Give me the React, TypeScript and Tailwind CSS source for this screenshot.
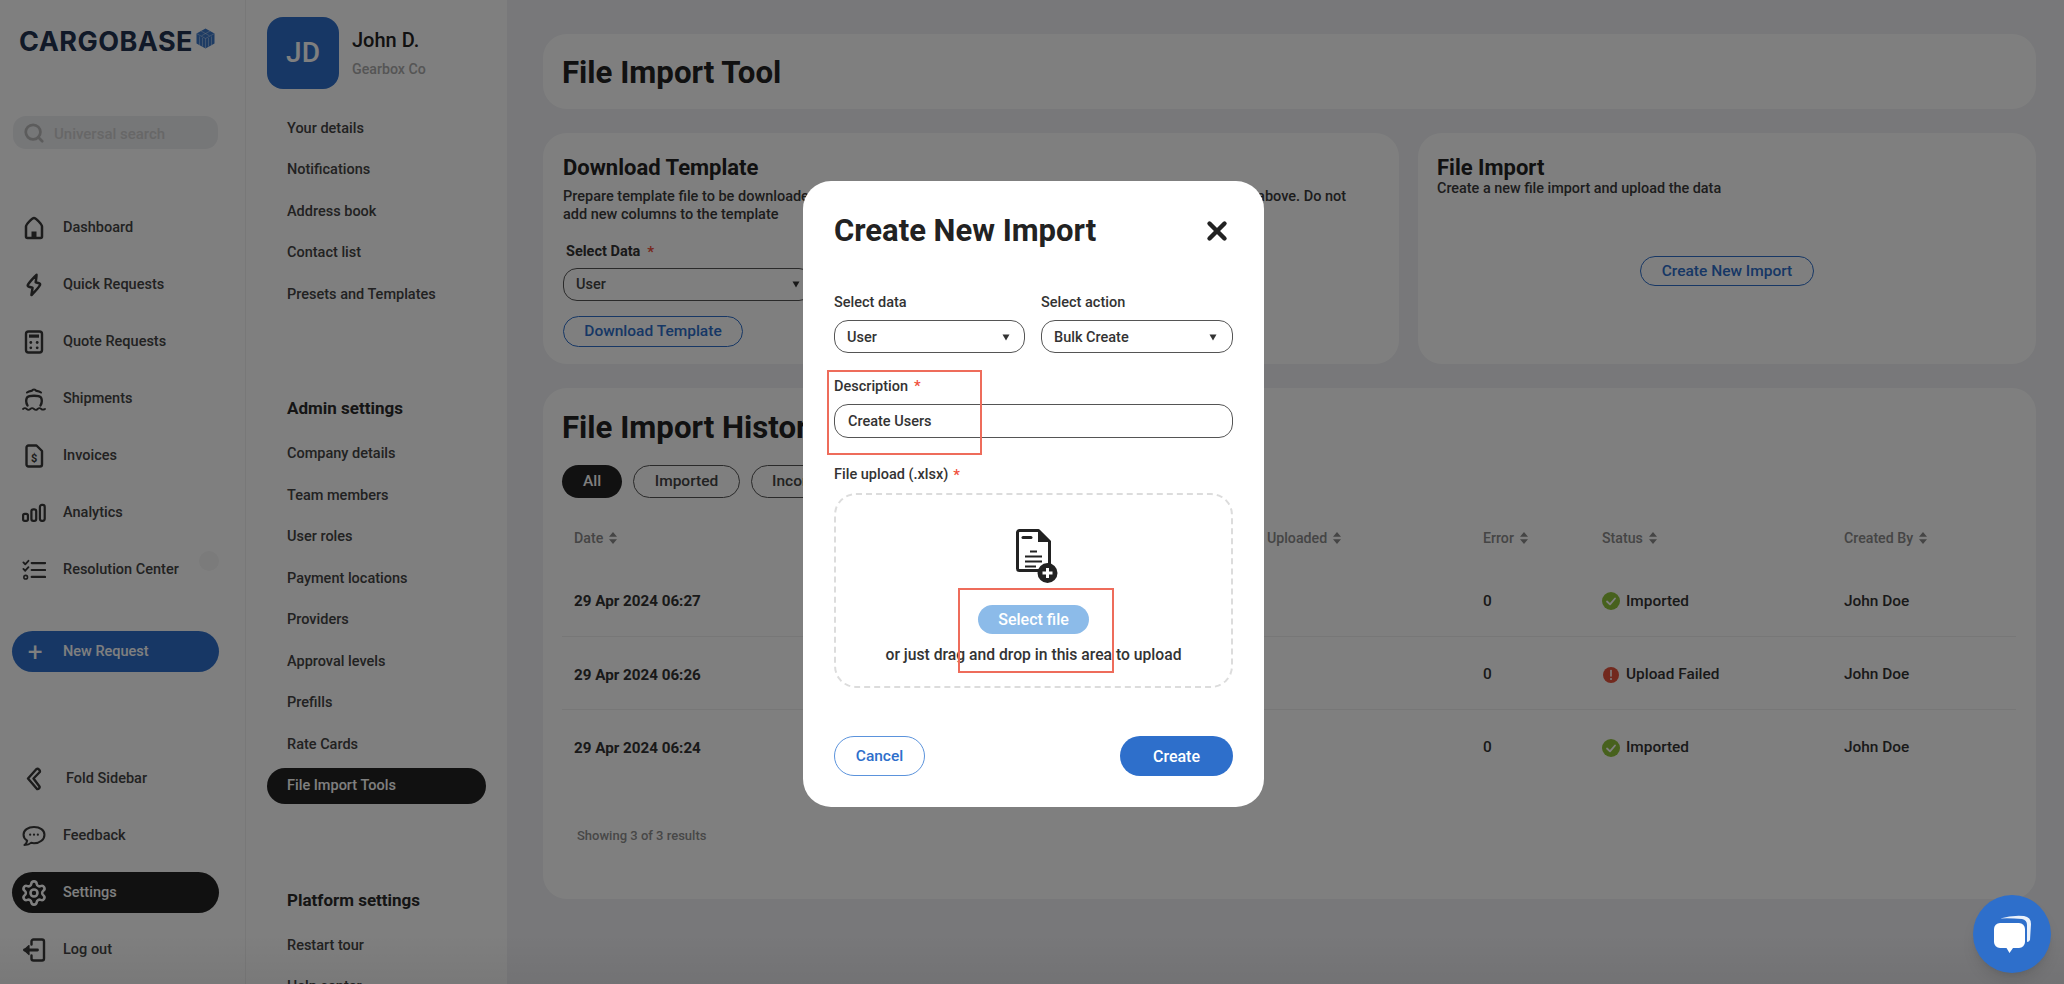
import React from "react";
import { Search, Settings, X } from "lucide-react";

const ic = "text-[#383838]";

const Home = () => (
  <svg width="24" height="24" viewBox="0 0 24 24" fill="none" stroke="currentColor" strokeWidth="2.5" strokeLinejoin="round">
    <path d="M4 20.500V10.500C4 8.500 10 2 12 2s8 6.500 8 8.500v10a1.500 1.500 0 0 1-1.500 1.500h-13A1.500 1.500 0 0 1 4 20.500Z" />
    <rect x="9.500" y="15.500" width="5" height="6" fill="currentColor" stroke="none" />
  </svg>
);
const Bolt = () => (
  <svg width="24" height="24" viewBox="0 0 24 24" fill="none" stroke="currentColor" strokeWidth="2.5" strokeLinejoin="round">
    <path d="M14.500 1.800C12 4.500 7 9.500 5.800 12c-.4 1 .4 1.500 1.200 1.700l3.500 1c-.2 2.500-.8 5-1 7.300 2.500-2.500 7-7 8.500-10 .4-1-.3-1.500-1-1.700l-3.300-1c.3-2.500.8-5 .8-7.500Z" />
  </svg>
);
const Calc = () => (
  <svg width="24" height="24" viewBox="0 0 24 24" fill="none" stroke="currentColor" strokeWidth="2.4">
    <rect x="4" y="1.500" width="16" height="21" rx="2.500" />
    <rect x="7" y="4.500" width="10" height="3.200" fill="currentColor" stroke="none" />
    <g fill="currentColor" stroke="none">
      <circle cx="8.800" cy="12.500" r="1.400" /><circle cx="15.200" cy="12.500" r="1.400" />
      <circle cx="8.800" cy="17.800" r="1.400" /><circle cx="15.200" cy="17.800" r="1.400" />
    </g>
  </svg>
);
const Ship = () => (
  <svg width="24" height="24" viewBox="0 0 24 24" fill="none" stroke="currentColor" strokeWidth="2.400" strokeLinecap="round" strokeLinejoin="round">
    <path d="M5 5.500C7 4 9 4 10 3.800 10.500 2 13.500 2 14 3.800c1 .2 3 .2 5 1.700" strokeWidth="2.100" />
    <path d="M5.500 18.500C3.500 15 4 12.500 5 10.500c2-2.400 12-2.400 14 0 1 2 1.500 4.500-.5 8" />
    <path d="M1 22c1.500-1.200 2.500-1.200 3.700 0s2.400 1.200 3.600 0 2.400-1.200 3.700 0 2.400 1.200 3.600 0 2.400-1.200 3.700 0 2 .8 3.700 0" strokeWidth="1.800" />
  </svg>
);
const Invoice = () => (
  <svg width="24" height="24" viewBox="0 0 24 24" fill="none" stroke="currentColor" strokeWidth="2.400" strokeLinejoin="round">
    <path d="M6.500 1.500h8l5.500 5.500v13.500a2 2 0 0 1-2 2H6.500a2 2 0 0 1-2-2v-17a2 2 0 0 1 2-2Z" />
    <text x="12.200" y="18" textAnchor="middle" fontSize="11" fontFamily="Roboto, sans-serif" fontWeight="700" fill="currentColor" stroke="none">$</text>
  </svg>
);
const Bars = () => (
  <svg width="26" height="20" viewBox="0 0 26 20" fill="none" stroke="currentColor" strokeWidth="2.400">
    <rect x="1.200" y="11" width="5.200" height="7.500" rx="1.800" />
    <rect x="10.200" y="6" width="5.200" height="12.500" rx="2" />
    <rect x="19.400" y="1.200" width="5.200" height="17.300" rx="2.200" />
  </svg>
);
const Checks = () => (
  <svg width="26" height="22" viewBox="0 0 26 22" fill="none" stroke="currentColor" strokeWidth="2.400" strokeLinecap="round" strokeLinejoin="round">
    <path d="M10.500 3.500h14.500M10.500 11h14.500M10.500 18.500h14.500" />
    <path d="M1.500 2.800 3.500 4.800 7 1M1.500 9.800 3.500 11.800 7 8" strokeWidth="2" />
    <circle cx="4" cy="18.800" r="2" strokeWidth="1.700" />
  </svg>
);
const Fold = () => (
  <svg width="16" height="24" viewBox="0 0 16 24" fill="none" stroke="currentColor" strokeWidth="2.400" strokeLinejoin="round">
    <path d="M10.500 2 2 11.500 11 22c1.500.5 3-1.200 2.500-2.500L7.500 11.500l6.300-6.500c.7-1.500-1.600-4-3.300-3Z" />
  </svg>
);
const Chat = () => (
  <svg width="28" height="24" viewBox="0 0 28 24" fill="none" stroke="currentColor" strokeWidth="2.400" strokeLinejoin="round">
    <path d="M14 1.500C7 1.500 1.800 5.200 1.800 10.500c0 3 1.700 5.300 4.200 6.800-.2 2-1.200 3.800-3.200 5.200 3.500 0 6-.8 7.700-2.500 1.100.3 2.300.5 3.500.5 7 0 12.200-4.400 12.200-10S21 1.500 14 1.500Z" />
    <g fill="currentColor" stroke="none">
      <circle cx="9.500" cy="10.500" r="1.300" /><circle cx="14" cy="10.500" r="1.300" /><circle cx="18.500" cy="10.500" r="1.300" />
    </g>
  </svg>
);
const Logout = () => (
  <svg width="24" height="24" viewBox="0 0 24 24" fill="none" stroke="currentColor" strokeWidth="2.400" strokeLinecap="round" strokeLinejoin="round">
    <path d="M9.500 6.500V3.500a2 2 0 0 1 2-2h8.500a2 2 0 0 1 2 2v17a2 2 0 0 1-2 2h-8.500a2 2 0 0 1-2-2v-3" />
    <path d="M15.500 12H2.500" strokeWidth="2.800" />
    <path d="M7 7.500 2 12l5 4.500Z" fill="currentColor" strokeWidth="1.200" />
  </svg>
);
const Hex = () => (
  <svg width="19" height="21" viewBox="0 0 19 21" className="ml-[3px] mt-[-7px]">
    <polygon points="9.5,0.5 18.500,5.500 18.500,15.500 9.500,20.500 0.500,15.500 0.500,5.500" fill="#3d78c8" />
    <g stroke="#e8f0fa" strokeWidth=".7" fill="none" opacity=".6">
      <path d="M9.500 10.500V20M9.500 10.500 18 5.800M9.500 10.500 1 5.800M5 3 13.500 7.800M14 3 5.500 7.800M3.500 8.500v8.500M6.500 10v8.500M12.500 10v8.500M15.500 8.500v8.500" />
    </g>
  </svg>
);
const Sort = () => (
  <svg width="8" height="12" viewBox="0 0 8 12" fill="currentColor" className="ml-[6px]">
    <path d="M4 0 8 4.800H0ZM4 12 0 7.200H8Z" />
  </svg>
);
const Caret = () => (
  <svg width="8" height="7" viewBox="0 0 8 7" fill="#333"><path d="M0.500 0.500h7L4 6.500Z" /></svg>
);
const Star = () => <span className="text-[#f0503c] text-[15px] leading-none">*</span>;

const OkIcon = () => (
  <svg width="18" height="18" viewBox="0 0 18 18">
    <circle cx="9" cy="9" r="9" fill="#8fc33a" />
    <path d="M5 9.500 8 12.300 13 6.500" stroke="#fff" strokeWidth="1.800" fill="none" strokeLinecap="round" strokeLinejoin="round" />
  </svg>
);
const ErrIcon = () => (
  <svg width="18" height="18" viewBox="0 0 18 18">
    <circle cx="9" cy="9" r="8" fill="#e5533d" />
    <path d="M9 4.500v5.500" stroke="#fff" strokeWidth="1.600" strokeLinecap="round" />
    <circle cx="9" cy="13" r="1" fill="#fff" />
  </svg>
);

const FileAdd = () => (
  <svg width="42" height="54" viewBox="0 0 42 54" fill="none">
    <path d="M3.500 1.500h19l11 11v27a2 2 0 0 1-2 2h-28a2 2 0 0 1-2-2v-36a2 2 0 0 1 2-2Z" stroke="#222" strokeWidth="3" fill="#fff" strokeLinejoin="round" />
    <path d="M22 1.500 33.500 13H22Z" fill="#222" />
    <path d="M7 8.500h8" stroke="#222" strokeWidth="3" strokeLinecap="round" />
    <path d="M14 22.500h7M9 27.500h17M9 32.500h17M9 37.500h11" stroke="#222" strokeWidth="2.200" />
    <circle cx="31.500" cy="44" r="10" fill="#222" />
    <path d="M31.500 39v10M26.500 44h10" stroke="#fff" strokeWidth="3" />
  </svg>
);

const mainNav = [
  { label: "Dashboard", icon: <Home /> },
  { label: "Quick Requests", icon: <Bolt /> },
  { label: "Quote Requests", icon: <Calc /> },
  { label: "Shipments", icon: <Ship /> },
  { label: "Invoices", icon: <Invoice /> },
  { label: "Analytics", icon: <Bars /> },
  { label: "Resolution Center", icon: <Checks /> },
];

const NavRow = ({ icon, label, offset }: { icon: React.ReactNode; label: string; offset?: boolean }) => (
  <div className="h-[57px] flex items-center text-[14.500px] font-medium text-[#444]">
    <span className={`w-[24px] ml-[22px] flex justify-center shrink-0 ${ic}`}>{icon}</span>
    <span className={offset ? "ml-[20px]" : "ml-[17px]"}>{label}</span>
  </div>
);

const Sub = ({ label, active }: { label: string; active?: boolean }) => (
  <div className="h-[41.500px] flex items-center">
    {active ? (
      <div className="w-[219px] h-[36px] rounded-full bg-[#222] text-white pl-[20px] flex items-center text-[14.500px] font-medium">{label}</div>
    ) : (
      <span className="pl-[20px] text-[14.500px] font-medium text-[#444]">{label}</span>
    )}
  </div>
);

const rows = [
  { date: "29 Apr 2024 06:27", ok: true, h: "h-[74px] pt-[4px]" },
  { date: "29 Apr 2024 06:26", ok: false, h: "h-[73px] pt-[4px]" },
  { date: "29 Apr 2024 06:24", ok: true, h: "h-[74px] pt-[2px]" },
];

const Col = "grid grid-cols-[693px_216px_119px_242px_1fr] pl-[12px] items-center";

export default function App() {
  return (
    <div className="relative w-full h-screen overflow-hidden flex bg-white font-['Roboto',sans-serif] text-[#333]">
      {/* Primary sidebar */}
      <aside className="w-[246px] shrink-0 h-full bg-white border-r border-[#f0f0f0] flex flex-col relative">
        <div className="h-[116px] pl-[19px] pt-[24px] flex items-start">
          <div className="flex items-center mt-[2px]">
            <span className="font-['Inter',sans-serif] font-bold text-[#233350] text-[27px] leading-[32px] tracking-[0.450px]">CARGOBASE</span>
            <Hex />
          </div>
        </div>
        <div className="ml-[13px] w-[205px] h-[33px] rounded-[13px] bg-[#edeef1] flex items-center pl-[10px]">
          <Search size={22} strokeWidth={3} className="text-[#b8b8b8]" />
          <span className="ml-[9px] mt-[3px] text-[15px] font-medium text-[#cfcfcf]">Universal search</span>
        </div>
        <nav className="mt-[50px]">
          {mainNav.map((n) => <NavRow key={n.label} icon={n.icon} label={n.label} />)}
        </nav>
        <div className="ml-[12px] mt-[33px] w-[207px] h-[41px] rounded-full bg-[#2e6fcb] flex items-center text-white text-[14.500px] font-medium">
          <span className="ml-[16px] text-[26px] font-normal leading-none w-[14px] flex justify-center">+</span>
          <span className="ml-[21px]">New Request</span>
        </div>
        <div className="mt-[78px]"><NavRow icon={<Fold />} label="Fold Sidebar" offset /></div>
        <NavRow icon={<Chat />} label="Feedback" />
        <div className="h-[57px] flex items-center">
          <div className="ml-[12px] w-[207px] h-[41px] rounded-full bg-[#222] text-white flex items-center text-[14.500px] font-medium">
            <Settings size={28} strokeWidth={2.200} className="ml-[8px]" />
            <span className="ml-[15px]">Settings</span>
          </div>
        </div>
        <NavRow icon={<Logout />} label="Log out" />
        <span className="absolute left-[199px] top-[551px] w-[20px] h-[20px] rounded-full bg-[#f6f6f6]" />
      </aside>

      {/* Secondary sidebar */}
      <aside className="w-[261px] shrink-0 h-full bg-white pl-[21px] pt-[17px]">
        <div className="flex items-start">
          <div className="w-[72px] h-[72px] rounded-[16px] bg-[#2e6fcb] text-white text-[28px] font-medium flex items-center justify-center">JD</div>
          <div className="ml-[13px]">
            <div className="text-[20px] leading-[26px] font-medium text-[#222] mt-[10px]">John D.</div>
            <div className="text-[14.200px] leading-[18px] mt-[7px] text-[#ababab] font-medium">Gearbox Co</div>
          </div>
        </div>
        <div className="mt-[19px]">
          {["Your details", "Notifications", "Address book", "Contact list", "Presets and Templates"].map((s) => <Sub key={s} label={s} />)}
        </div>
        <div className="mt-[81px] h-[24px] flex items-center pl-[20px] text-[17px] font-bold text-[#2b2b2b]">Admin settings</div>
        <div className="mt-[13px]">
          {["Company details", "Team members", "User roles", "Payment locations", "Providers", "Approval levels", "Prefills", "Rate Cards"].map((s) => <Sub key={s} label={s} />)}
          <Sub label="File Import Tools" active />
        </div>
        <div className="mt-[82px] h-[24px] flex items-center pl-[20px] text-[17px] font-bold text-[#2b2b2b]">Platform settings</div>
        <div className="mt-[12px]">
          <Sub label="Restart tour" />
          <Sub label="Help center" />
        </div>
      </aside>

      {/* Main area */}
      <main className="flex-1 h-full bg-[#f0f1f4] pl-[36px] pr-[28px] pt-[34px] flex flex-col">
        <div className="h-[75px] rounded-[24px] bg-white pl-[19px] pt-[3px] flex items-center">
          <h1 className="text-[31.200px] font-bold text-[#222]">File Import Tool</h1>
        </div>
        <div className="mt-[24px] h-[231px] flex gap-[19px]">
          <section className="w-[856px] rounded-[24px] bg-white pl-[20px] pt-[21px]">
            <h2 className="text-[22px] leading-[28px] font-bold text-[#222]">Download Template</h2>
            <p className="mt-[6px] w-[795px] text-[14.500px] leading-[18px] font-medium text-[#3a3a3a]">
              Prepare template file to be downloaded by picking the data and the action you wish to perform from the list above. Do not add new columns to the template
            </p>
            <div className="mt-[18px] pl-[3px] h-[20px] flex items-center gap-[7px] text-[14.500px] font-bold text-[#333]">Select Data <Star /></div>
            <div className="mt-[6px] w-[250px] h-[33px] rounded-[14px] border border-[#555] pl-[12px] pr-[9px] flex items-center justify-between text-[14.500px] font-medium text-[#444]">
              <span>User</span><span className="mr-[3px]"><Caret /></span>
            </div>
            <div className="mt-[15px] w-[180px] h-[31px] rounded-full border border-[#2e6fcb] flex items-center justify-center text-[15.500px] font-medium text-[#2e6fcb]">Download Template</div>
          </section>
          <section className="flex-1 rounded-[24px] bg-white pl-[19px] pt-[23px]">
            <h2 className="text-[22px] leading-[24px] font-bold text-[#222]">File Import</h2>
            <p className="text-[14.400px] leading-[18px] font-medium text-[#3a3a3a]">Create a new file import and upload the data</p>
            <div className="mt-[58px] pr-[19px] flex justify-center">
              <div className="w-[174px] h-[30px] pt-[2px] rounded-full border border-[#2e6fcb] flex items-center justify-center text-[15.500px] font-medium text-[#2e6fcb]">Create New Import</div>
            </div>
          </section>
        </div>
        <section className="mt-[24px] h-[511px] rounded-[24px] bg-white pl-[19px] pr-[20px] pt-[20px]">
          <h2 className="text-[31.200px] leading-[40px] font-bold text-[#222]">File Import History</h2>
          <div className="mt-[17px] flex gap-[11px]">
            <span className="w-[60px] h-[33px] rounded-full bg-[#222] text-white flex items-center justify-center text-[15.500px] font-medium">All</span>
            <span className="w-[107px] h-[33px] rounded-full border border-[#555] flex items-center justify-center text-[15.500px] font-medium text-[#444]">Imported</span>
            <span className="w-[120px] h-[33px] rounded-full border border-[#555] flex items-center justify-center text-[15.500px] font-medium text-[#444]">Incomplete</span>
          </div>
          <div className={`${Col} mt-[18px] h-[47px] pb-[2px] text-[14.200px] font-medium text-[#8a8a8a]`}>
            <span className="flex items-center">Date<Sort /></span>
            <span className="flex items-center">Uploaded<Sort /></span>
            <span className="flex items-center">Error<Sort /></span>
            <span className="flex items-center">Status<Sort /></span>
            <span className="flex items-center">Created By<Sort /></span>
          </div>
          {rows.map((r, i) => (
            <div key={r.date} className={`${Col} ${r.h} ${i < 2 ? "border-b border-[#eee]" : ""} text-[15.400px] font-medium text-[#333]`}>
              <span className="font-bold text-[15.200px]">{r.date}</span>
              <span />
              <span>0</span>
              <span className="flex items-center gap-[6px]">{r.ok ? <OkIcon /> : <ErrIcon />}{r.ok ? "Imported" : "Upload Failed"}</span>
              <span>John Doe</span>
            </div>
          ))}
          <div className="mt-[42px] pl-[15px] text-[13px] font-medium text-[#8f8f8f]">Showing 3 of 3 results</div>
        </section>
      </main>

      {/* Dim layer and dialog */}
      <div className="absolute inset-0 bg-black/50 flex items-center justify-center pl-[3px] pt-[4px]">
        <div className="absolute inset-x-0 bottom-0 h-[50px] bg-gradient-to-b from-transparent to-black/5" />
        <div role="dialog" className="relative w-[461px] h-[626px] rounded-[28px] bg-white px-[31px] pt-[30px]">
          <div className="h-[40px] flex items-center justify-between">
            <h2 className="text-[31px] pt-[1px] font-bold text-[#222]">Create New Import</h2>
            <X size={30} strokeWidth={3.500} className="text-[#222] mr-[1px]" />
          </div>
          <div className="mt-[41px] flex gap-[16px] text-[14.500px] font-medium text-[#333]">
            <div className="w-[191px]">
              <div className="h-[20px] pt-[1px] flex items-center">Select data</div>
              <div className="mt-[8px] h-[33px] pt-[2px] rounded-[14px] border border-[#555] pl-[12px] pr-[14px] flex items-center justify-between"><span>User</span><Caret /></div>
            </div>
            <div className="w-[192px]">
              <div className="h-[20px] pt-[1px] flex items-center">Select action</div>
              <div className="mt-[8px] h-[33px] pt-[2px] rounded-[14px] border border-[#555] pl-[12px] pr-[15px] flex items-center justify-between"><span>Bulk Create</span><Caret /></div>
            </div>
          </div>
          <div className="mt-[23px] pt-[1px] h-[20px] flex items-center gap-[6px] text-[14.500px] font-medium text-[#333]">Description <Star /></div>
          <div className="mt-[8px] h-[34px] pt-[1px] rounded-[14px] border border-[#555] pl-[13px] flex items-center text-[14.500px] font-medium text-[#333]">Create Users</div>
          <div className="mt-[27px] h-[20px] flex items-center gap-[5px] text-[14.500px] font-medium text-[#333]">File upload (.xlsx) <Star /></div>
          <div className="mt-[8px] h-[195px] rounded-[22px] border-2 border-dashed border-[#dcdcdc] flex flex-col items-center pt-[34px]">
            <div className="h-[54px] w-[42px] ml-[6px]"><FileAdd /></div>
            <div className="mt-[22px] w-[111px] h-[29px] rounded-full bg-[#8cbbe9] text-white flex items-center justify-center text-[16px] font-medium">Select file</div>
            <div className="mt-[9px] h-[20px] text-[15.700px] font-medium text-[#333]">or just drag and drop in this area to upload</div>
          </div>
          <div className="mt-[48px] flex justify-between">
            <div className="w-[91px] h-[40px] pt-[2px] rounded-full border border-[#5b93dc] flex items-center justify-center text-[15.500px] font-medium text-[#2e6fcb]">Cancel</div>
            <div className="w-[113px] h-[40px] pt-[2px] rounded-full bg-[#2e6fcb] flex items-center justify-center text-[16px] font-medium text-white">Create</div>
          </div>
          <div className="absolute left-[24px] top-[189px] w-[155px] h-[85px] border-2 border-[#ee6c5b]" />
          <div className="absolute left-[155px] top-[407px] w-[156px] h-[85px] border-2 border-[#ee6c5b]" />
        </div>
      </div>

      {/* Chat launcher */}
      <div className="absolute left-[1973px] top-[895px] w-[78px] h-[78px] rounded-full bg-[#2e6fcb] shadow-lg flex items-center justify-center">
        <svg width="40" height="40" viewBox="0 0 40 40">
          <path d="M8 4.500Q20 1 32 2 39 3 39 10L38 26Q37 28 35 28V11Q35 6 30 5 18 4 8 4.500Z" fill="#fff" opacity=".9" />
          <path d="M8 9h19a6 6 0 0 1 6 6v13a6 6 0 0 1-6 6h-6l-3.500 5-3-5H8a6 6 0 0 1-6-6V15a6 6 0 0 1 6-6Z" fill="#fff" />
        </svg>
      </div>
    </div>
  );
}
